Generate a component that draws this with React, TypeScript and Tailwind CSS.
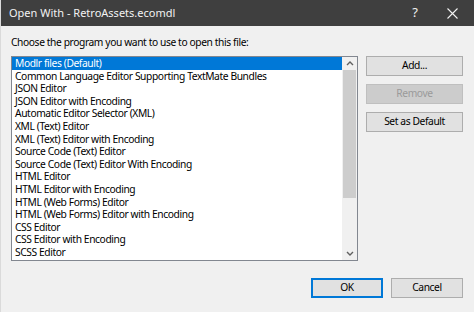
const programs = [
  "Modlr files (Default)",
  "Common Language Editor Supporting TextMate Bundles",
  "JSON Editor",
  "JSON Editor with Encoding",
  "Automatic Editor Selector (XML)",
  "XML (Text) Editor",
  "XML (Text) Editor with Encoding",
  "Source Code (Text) Editor",
  "Source Code (Text) Editor With Encoding",
  "HTML Editor",
  "HTML Editor with Encoding",
  "HTML (Web Forms) Editor",
  "HTML (Web Forms) Editor with Encoding",
  "CSS Editor",
  "CSS Editor with Encoding",
  "SCSS Editor",
];

function Chevron({ up }: { up?: boolean }) {
  return (
    <svg width="8" height="5" viewBox="0 0 8 5" className="text-[#606060]">
      <path
        d={up ? "M1 4 L4 1 L7 4" : "M1 1 L4 4 L7 1"}
        fill="none"
        stroke="currentColor"
        strokeWidth="1.4"
      />
    </svg>
  );
}

function DialogButton({
  label,
  disabled,
  primary,
  className = "",
}: {
  label: string;
  disabled?: boolean;
  primary?: boolean;
  className?: string;
}) {
  const tone = disabled
    ? "bg-[#cccccc] border border-[#bfbfbf] text-[#9a9a9a]"
    : primary
    ? "bg-[#e1e1e1] border-2 border-[#0078d7] text-black"
    : "bg-[#e1e1e1] border border-[#adadad] text-black";
  return (
    <div
      className={`h-[20px] flex items-center justify-center text-[10.25px] tracking-[-0.4px] ${tone} ${className}`}
    >
      {label}
    </div>
  );
}

export default function App() {
  return (
    <div
      className="w-[474px] h-[312px] bg-[#f0f0f0] flex flex-col overflow-hidden border-l border-[#dadada]"
      style={{ fontFamily: '"Noto Sans", "Liberation Sans", sans-serif' }}
    >
      <div className="h-[26px] shrink-0 bg-[#3f3f3f] flex items-center pl-[8px] text-[11px] text-[#f2f2f2]">
        <span className="flex-1">Open With - RetroAssets.ecomdl</span>
        <span className="w-[20px] text-center text-[13px] mr-[22px]">?</span>
        <svg width="11" height="11" viewBox="0 0 11 11" className="mr-[16px]">
          <path d="M0.5 0.5 L10.5 10.5 M10.5 0.5 L0.5 10.5" stroke="#f2f2f2" strokeWidth="1.1" />
        </svg>
      </div>

      <div className="flex-1 flex flex-col px-[10px]">
        <div className="h-[30px] flex items-center text-[10.25px] tracking-[-0.4px] text-black pt-[3px]">
          Choose the program you want to use to open this file:
        </div>

        <div className="flex gap-[8px]">
          <div className="w-[347px] h-[205px] border border-[#828790] bg-white flex">
            <div className="flex-1 flex flex-col text-[10.25px] tracking-[-0.4px] text-black">
              {programs.map((p, i) => (
                <div
                  key={p}
                  className={`h-[12.6px] leading-[12.6px] pl-[3px] whitespace-nowrap ${
                    i === 0 ? "bg-[#0078d7] text-white" : ""
                  }`}
                >
                  {p}
                </div>
              ))}
            </div>
            <div className="w-[15px] bg-[#f0f0f0] flex flex-col items-center">
              <div className="h-[13px] flex items-center justify-center">
                <Chevron up />
              </div>
              <div className="w-[13px] h-[128px] bg-[#cdcdcd]" />
              <div className="flex-1" />
              <div className="h-[13px] flex items-center justify-center">
                <Chevron />
              </div>
            </div>
          </div>

          <div className="w-[97px] flex flex-col gap-[8px]">
            <DialogButton label="Add..." />
            <DialogButton label="Remove" disabled />
            <DialogButton label="Set as Default" />
          </div>
        </div>

        <div className="flex justify-end gap-[8px] mt-[17px] pr-[1px]">
          <DialogButton label="OK" primary className="w-[72px]" />
          <DialogButton label="Cancel" className="w-[72px]" />
        </div>
      </div>
    </div>
  );
}
